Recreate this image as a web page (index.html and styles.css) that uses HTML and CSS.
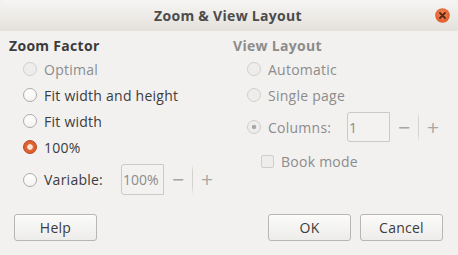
FILE: index.html
```html
<!DOCTYPE html>
<html>
<head>
<meta charset="utf-8">
<link rel="stylesheet" href="styles.css">
</head>
<body>
<div class="win">
  <div class="titlebar">
    <span class="title">Zoom &amp; View Layout</span>
    <span class="close">
      <svg width="15" height="15" viewBox="0 0 15 15">
        <defs>
          <radialGradient id="cg" cx="50%" cy="40%" r="60%">
            <stop offset="0" stop-color="#f5895a"/>
            <stop offset="1" stop-color="#de5a28"/>
          </radialGradient>
        </defs>
        <circle cx="7.5" cy="7.5" r="7.3" fill="url(#cg)"/>
        <path d="M5 5 L10 10 M10 5 L5 10" stroke="#5a2a16" stroke-width="1.8" stroke-linecap="round"/>
      </svg>
    </span>
  </div>
  <div class="body">
    <div class="col left">
      <div class="hdr">Zoom Factor</div>
      <div class="opts">
        <div class="row dis"><span class="radio"></span><span class="lbl">Optimal</span></div>
        <div class="row"><span class="radio"></span><span class="lbl">Fit width and height</span></div>
        <div class="row"><span class="radio"></span><span class="lbl">Fit width</span></div>
        <div class="row"><span class="radio on"></span><span class="lbl">100%</span></div>
        <div class="row spinrow"><span class="radio"></span><span class="lbl wide">Variable:</span>
          <div class="spin"><span class="entry">100%</span><span class="btn">−</span><span class="sep"></span><span class="btn">+</span></div>
        </div>
      </div>
    </div>
    <div class="col right">
      <div class="hdr dis">View Layout</div>
      <div class="opts">
        <div class="row dis"><span class="radio"></span><span class="lbl">Automatic</span></div>
        <div class="row dis"><span class="radio"></span><span class="lbl">Single page</span></div>
        <div class="row spinrow2 dis"><span class="radio ondis"></span><span class="lbl wide2">Columns:</span>
          <div class="spin"><span class="entry">1</span><span class="btn">−</span><span class="sep"></span><span class="btn">+</span></div>
        </div>
        <div class="row checkrow dis"><span class="check"></span><span class="lbl">Book mode</span></div>
      </div>
    </div>
  </div>
  <div class="footer">
    <button class="pbtn">Help</button>
    <span class="grow"></span>
    <button class="pbtn">OK</button>
    <button class="pbtn">Cancel</button>
  </div>
</div>
</body>
</html>
```

FILE: styles.css
```css
* { box-sizing: border-box; }
html, body { margin: 0; padding: 0; }
body {
  width: 458px;
  height: 255px;
  overflow: hidden;
  font-family: "Open Sans", "Noto Sans", sans-serif;
  font-size: 14px;
  letter-spacing: 0.25px;
  color: #3c3c3c;
  background: #f2f1f0;
}
.win {
  width: 458px;
  height: 255px;
  display: flex;
  flex-direction: column;
  background: #f2f1f0;
}
.titlebar {
  height: 31px;
  flex: none;
  display: flex;
  align-items: center;
  justify-content: center;
  position: relative;
  background: linear-gradient(#f6f5f3, #e4e1dc);
  border-radius: 5px 5px 0 0;
}
.title {
  font-weight: bold;
  font-size: 14px;
  letter-spacing: 0.3px;
  color: #4c4c4c;
  margin-top: -1px;
  margin-left: -2px;
}
.close {
  position: absolute;
  right: 8px;
  top: 8px;
  width: 15px;
  height: 15px;
  display: block;
}
.close svg { display: block; }
.body {
  flex: none;
  display: flex;
  padding: 6px 0 0 9px;
}
.col.left { width: 224px; }
.col.right { flex: 1; }
.hdr {
  font-weight: bold;
  height: 18px;
  line-height: 18px;
  margin-bottom: 1px;
  color: #3c3c3c;
  letter-spacing: 0.3px;
}
.hdr.dis { color: #8c8c8c; }
.opts { padding-left: 14px; }
.row {
  height: 26px;
  display: flex;
  align-items: center;
}
.dis .lbl, .row.dis { color: #8c8c8c; }
.lbl { margin-left: 7px; white-space: nowrap; }
.radio {
  width: 14px;
  height: 14px;
  flex: none;
  border-radius: 50%;
  border: 1px solid #aeaba6;
  background: linear-gradient(#ffffff, #f4f3f2);
}
.dis .radio { border-color: #d2d0cc; background: #eeedeb; }
.radio.on {
  border: 1px solid #b8461c;
  background: radial-gradient(circle, #fbe3d6 0, #fbe3d6 2.4px, #e06434 3.2px, #d95a2a 100%);
}
.dis .radio.ondis {
  border-color: #cfcdc9;
  background: radial-gradient(circle, #a9a7a3 0, #a9a7a3 1.8px, #eeedeb 2.6px);
}
.check {
  width: 13px;
  height: 13px;
  flex: none;
  border: 1px solid #d0cec9;
  border-radius: 2px;
  background: #eeedeb;
}
.spinrow { height: 31px; margin-top: 4px; }
.spinrow2 { height: 30px; margin-top: 4px; }
.checkrow { margin-top: 6px; padding-left: 14px; }
.lbl.wide { width: 77px; }
.lbl.wide2 { width: 79px; }
.spin {
  display: flex;
  align-items: stretch;
  height: 100%;
}
.entry {
  width: 43px;
  border: 1px solid #cdcac5;
  border-radius: 3px 0 0 3px;
  background: #f3f2f1;
  color: #8c8c8c;
  display: flex;
  align-items: center;
  padding-left: 1px;
  letter-spacing: 0;
}
.btn {
  width: 28px;
  display: flex;
  align-items: center;
  justify-content: center;
  color: #a8a6a2;
  font-size: 16px;
  font-family: "DejaVu Sans", sans-serif;
}
.sep {
  width: 1px;
  background: linear-gradient(rgba(210,208,204,0), #d4d2ce 25%, #d4d2ce 75%, rgba(210,208,204,0));
}
.footer {
  margin-top: auto;
  display: flex;
  padding: 0 15px 14px 14px;
  gap: 9px;
}
.grow { flex: 1; }
.pbtn {
  width: 83px;
  height: 27px;
  font-family: "Open Sans", "Noto Sans", sans-serif;
  font-size: 14px;
  letter-spacing: 0.25px;
  color: #3c3c3c;
  border: 1px solid #b9b6b1;
  border-radius: 3px;
  background: linear-gradient(#fbfbfa, #edecea);
  padding: 0;
}
```
